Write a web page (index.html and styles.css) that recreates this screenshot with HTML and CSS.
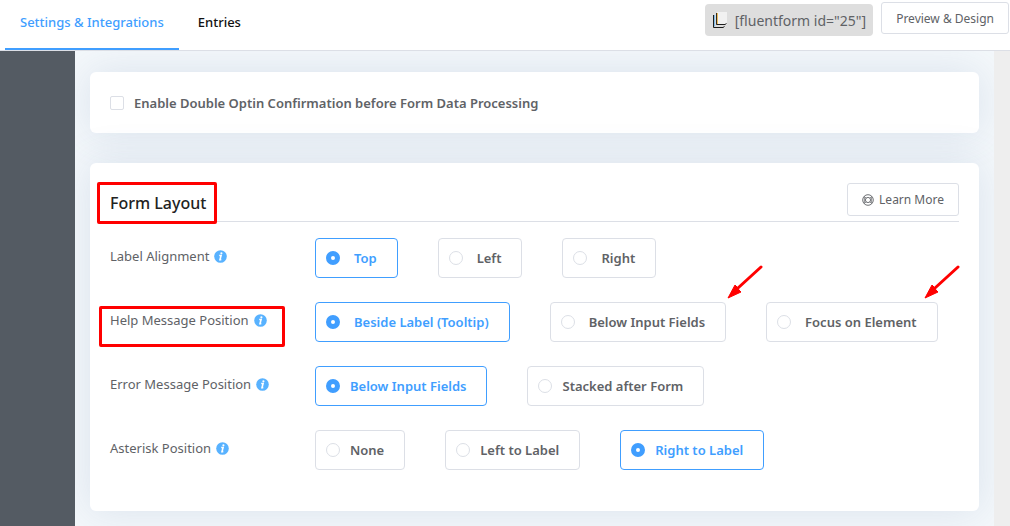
FILE: index.html
```
<!DOCTYPE html>
<html lang="en">
<head>
  <meta charset="UTF-8" />
  <meta name="viewport" content="width=device-width, initial-scale=1.0"/>
  <title>Form Settings</title>
  <link rel="stylesheet" href="styles.css">
</head>
<body>

<!-- Shared icons -->
<svg class="icon-defs" aria-hidden="true">
  <symbol id="icon-info" viewBox="0 0 13 13">
    <circle cx="6.5" cy="6.5" r="6.3" fill="#58b2ff"/>
    <circle cx="7.4" cy="3.3" r="1.1" fill="#fff"/>
    <path d="M5.2 5.5h1.9L6 9.6h1.3" fill="none" stroke="#fff" stroke-width="1.6"/>
  </symbol>
  <symbol id="icon-arrow" viewBox="0 0 36 34">
    <path d="M34 2L11 23" fill="none" stroke="#f00" stroke-width="3" stroke-linecap="round"/>
    <path d="M1 33L8 20L10 22L12 25L14 27Z" fill="#f00" stroke="#f00" stroke-width="1"/>
  </symbol>
</svg>

<header class="topbar">
  <nav class="tabs">
    <a href="#settings" class="tab active">Settings &amp; Integrations</a>
    <a href="#entries" class="tab">Entries</a>
  </nav>
  <div class="actions">
    <button type="button" class="shortcode">
      <svg class="copy-icon" viewBox="0 0 16 18" aria-hidden="true">
        <path d="M5 1h10v12l-2 1H5z" fill="#f1f1f1"/>
        <path d="M1.5 4v12.5H11l1.5-1" fill="none" stroke="#1c1c1c" stroke-width="1"/>
        <path d="M2.6 4v11.5" stroke="#74b8ea" stroke-width="1"/>
        <path d="M4.5 2v11.5H13l1.5-1" fill="none" stroke="#1c1c1c" stroke-width="1"/>
        <path d="M5.4 2v11" stroke="#e9b34c" stroke-width="1"/>
      </svg>
      [fluentform id="25"]
    </button>
    <button type="button" class="btn">Preview &amp; Design</button>
  </div>
</header>

<div class="page">
  <aside class="sidebar"></aside>

  <main class="content">
    <section class="card optin">
      <input type="checkbox" id="optin">
      <label for="optin">Enable Double Optin Confirmation before Form Data Processing</label>
    </section>

    <section class="card layout">
      <div class="card-head">
        <h2 class="title marked">Form Layout</h2>
        <button type="button" class="btn learn">
          <svg class="help-icon" viewBox="0 0 12 12" fill="none" stroke="#606266" aria-hidden="true">
            <circle cx="6" cy="6" r="5.3" stroke-width=".9"/>
            <circle cx="6" cy="6" r="2.6" stroke-width=".9"/>
            <path d="M2.4 2.2v7.6M9.6 2.2v7.6M3 3l1.2 1.2M9 3L7.8 4.2M3 9l1.2-1.2M9 9L7.8 7.8" stroke-width=".7"/>
          </svg>
          Learn More
        </button>
      </div>

      <div class="row" role="radiogroup" aria-labelledby="label-align">
        <div class="row-label">
          <span id="label-align">Label Alignment</span>
          <svg class="info" aria-hidden="true"><use href="#icon-info"/></svg>
        </div>
        <div class="options wide">
          <label class="option"><input type="radio" name="labelAlign" checked><span>Top</span></label>
          <label class="option"><input type="radio" name="labelAlign"><span>Left</span></label>
          <label class="option"><input type="radio" name="labelAlign"><span>Right</span></label>
        </div>
      </div>

      <div class="row" role="radiogroup" aria-labelledby="help-position">
        <div class="row-label marked">
          <span id="help-position">Help Message Position</span>
          <svg class="info" aria-hidden="true"><use href="#icon-info"/></svg>
        </div>
        <div class="options wide">
          <label class="option"><input type="radio" name="helpPosition" checked><span>Beside Label (Tooltip)</span></label>
          <label class="option">
            <input type="radio" name="helpPosition"><span>Below Input Fields</span>
            <svg class="arrow" aria-hidden="true"><use href="#icon-arrow"/></svg>
          </label>
          <label class="option">
            <input type="radio" name="helpPosition"><span>Focus on Element</span>
            <svg class="arrow inner" aria-hidden="true"><use href="#icon-arrow"/></svg>
          </label>
        </div>
      </div>

      <div class="row" role="radiogroup" aria-labelledby="error-position">
        <div class="row-label">
          <span id="error-position">Error Message Position</span>
          <svg class="info" aria-hidden="true"><use href="#icon-info"/></svg>
        </div>
        <div class="options">
          <label class="option"><input type="radio" name="errorPosition" checked><span>Below Input Fields</span></label>
          <label class="option"><input type="radio" name="errorPosition"><span>Stacked after Form</span></label>
        </div>
      </div>

      <div class="row" role="radiogroup" aria-labelledby="asterisk-position">
        <div class="row-label">
          <span id="asterisk-position">Asterisk Position</span>
          <svg class="info" aria-hidden="true"><use href="#icon-info"/></svg>
        </div>
        <div class="options">
          <label class="option"><input type="radio" name="asteriskPosition"><span>None</span></label>
          <label class="option"><input type="radio" name="asteriskPosition"><span>Left to Label</span></label>
          <label class="option"><input type="radio" name="asteriskPosition" checked><span>Right to Label</span></label>
        </div>
      </div>
    </section>
  </main>
</div>

</body>
</html>
```

FILE: styles.css
```
* {
  box-sizing: border-box;
}

body {
  margin: 0;
  min-height: 100vh;
  display: flex;
  flex-direction: column;
  font-family: 'Segoe UI', 'Noto Sans', sans-serif;
  font-size: 13px;
  color: #606266;
  background: #eee;
}

.icon-defs {
  display: none;
}

.topbar {
  display: flex;
  justify-content: space-between;
  background: white;
  border-bottom: 1px solid #dcdfe6;
  position: relative;
  z-index: 1;
}

.tabs {
  display: flex;
  gap: 4px;
  padding-left: 5px;
}

.tab {
  height: 50px;
  line-height: 44px;
  padding: 0 15px;
  border-bottom: 2px solid transparent;
  color: #111;
  font-weight: 500;
  text-decoration: none;
}

.tab.active {
  color: #409eff;
  border-bottom-color: #409eff;
}

.actions {
  display: flex;
  align-items: flex-start;
  gap: 8px;
  padding: 2px 1px 0 0;
}

button {
  font-family: inherit;
  color: #606266;
  cursor: pointer;
}

.btn {
  display: flex;
  align-items: center;
  height: 32px;
  padding: 0 14px;
  font-size: 12px;
  background: white;
  border: 1px solid #dcdfe6;
  border-radius: 3px;
}

.shortcode {
  display: flex;
  align-items: center;
  gap: 7px;
  height: 32px;
  margin-top: 2px;
  padding: 0 7px;
  font-size: 14px;
  background: #dedede;
  border: none;
  border-radius: 4px;
}

.copy-icon {
  width: 16px;
  height: 18px;
}

.page {
  flex: 1;
  display: flex;
  padding-right: 16px;
}

.sidebar {
  flex: 0 0 75px;
  background: #545b63;
}

.content {
  flex: 1;
  padding: 21px 15px 15px;
  background: #f4f8fb;
  overflow: hidden;
}

.card {
  background: white;
  border-radius: 6px;
  box-shadow: 0 0 40px 2px rgba(80, 106, 156, 0.14);
}

.optin {
  display: flex;
  align-items: center;
  gap: 10px;
  height: 61px;
  margin-bottom: 30px;
  padding: 0 20px;
  font-weight: 600;
}

input {
  appearance: none;
  margin: 0;
  width: 14px;
  height: 14px;
  background: white;
  border: 1px solid #dcdfe6;
}

#optin {
  border-radius: 2px;
}

.layout {
  position: relative;
  padding: 20px 20px 41px;
}

.card-head {
  display: flex;
  justify-content: space-between;
  padding-bottom: 5px;
  margin-bottom: 16px;
  border-bottom: 1px solid #dcdfe6;
}

.title {
  margin: 0;
  line-height: 40px;
  height: 33px;
  font-size: 16px;
  font-weight: 500;
  color: #222;
}

.learn {
  height: 33px;
  gap: 5px;
}

.help-icon {
  width: 12px;
  height: 12px;
}

.row {
  display: flex;
  align-items: flex-start;
}

.row + .row {
  margin-top: 24px;
}

.row-label {
  flex: 0 0 205px;
  display: flex;
  align-items: center;
  gap: 5px;
  height: 36px;
}

.info {
  width: 13px;
  height: 13px;
}

.options {
  display: flex;
  gap: 40px;
}

.option {
  position: relative;
  display: flex;
  align-items: center;
  gap: 10px;
  height: 40px;
  padding: 0 20px 0 10px;
  font-weight: 600;
  white-space: nowrap;
  border: 1px solid #dcdfe6;
  border-radius: 4px;
  cursor: pointer;
}

.wide .option {
  gap: 14px;
}

.option input {
  border-radius: 50%;
}

.option input:checked {
  border: 5px solid #409eff;
}

.option:has(input:checked) {
  color: #409eff;
  border-color: #409eff;
}

/* Red callouts */
.marked {
  position: relative;
}

.marked::after {
  content: "";
  position: absolute;
  border: 3px solid #f00;
  border-radius: 2px;
}

.title.marked::after {
  inset: -1px -11px -8px -13px;
}

.row-label.marked::after {
  inset: 4px 30px -9px -11px;
}

.arrow {
  position: absolute;
  left: 100%;
  bottom: 100%;
  width: 36px;
  height: 34px;
  margin: 0 0 4px 2px;
}

.arrow.inner {
  margin-left: -13px;
}
```
